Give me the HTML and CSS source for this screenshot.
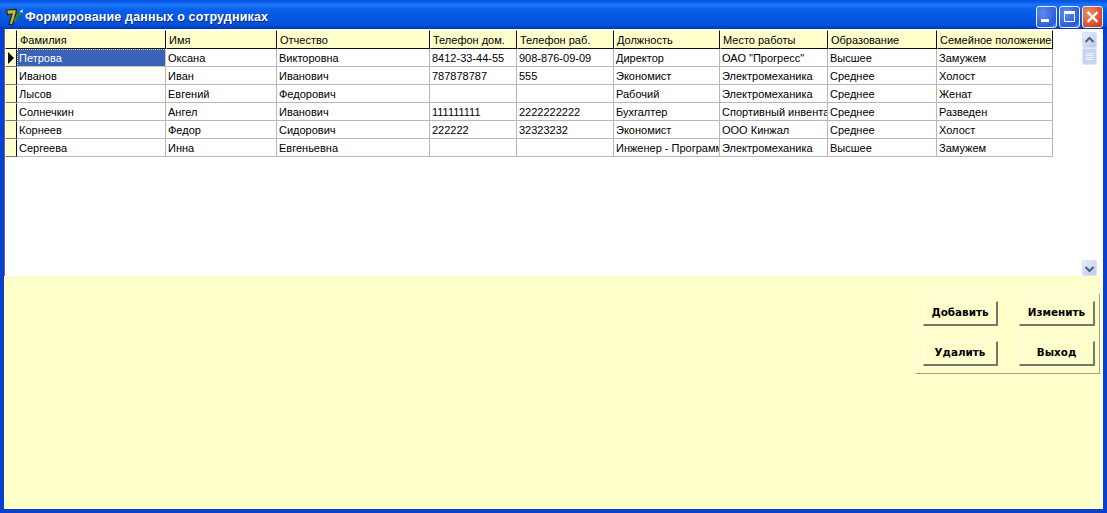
FILE: index.html
```html
<!DOCTYPE html>
<html lang="ru">
<head>
<meta charset="utf-8">
<title>Формирование данных о сотрудниках</title>
<link rel="stylesheet" href="styles.css">
</head>
<body>
<div class="window">
  <header class="titlebar">
    <svg class="appicon" width="20" height="18" viewBox="0 0 20 18">
      <path d="M1.5 2 L11.5 1.5 L11 5 L7.5 16.5 L4 16.5 L7 6 L2.5 6.5 Z" fill="#c9b840" stroke="#1f2a14" stroke-width="1.2"/>
      <path d="M9 13 L15.5 4.5" stroke="#2f7d32" stroke-width="3"/>
      <path d="M14.5 3.5 L18 1 L17.5 5 Z" fill="#e8e8d0"/>
    </svg>
    <span class="title">Формирование данных о сотрудниках</span>
    <div class="caption-buttons">
      <div class="cap cap-min"><svg width="19" height="20" viewBox="0 0 19 20"><rect x="4" y="12" width="8" height="3" fill="#fff"/></svg></div>
      <div class="cap cap-max"><svg width="19" height="20" viewBox="0 0 19 20"><path d="M4.5 4.5h10v10h-10z" fill="none" stroke="#fff"/><rect x="4" y="4" width="11" height="3" fill="#fff"/></svg></div>
      <div class="cap cap-close"><svg width="19" height="20" viewBox="0 0 19 20"><path d="M4.5 5 L14.5 15 M14.5 5 L4.5 15" stroke="#fff" stroke-width="2.4"/></svg></div>
    </div>
  </header>
  <main class="client">
    <section class="grid-area">
      <table class="grid">
        <colgroup>
          <col class="c0"><col class="c1"><col class="c2"><col class="c3"><col class="c4"><col class="c5"><col class="c6"><col class="c7"><col class="c8"><col class="c9">
        </colgroup>
        <thead>
          <tr><th></th><th>Фамилия</th><th>Имя</th><th>Отчество</th><th>Телефон дом.</th><th>Телефон раб.</th><th>Должность</th><th>Место работы</th><th>Образование</th><th>Семейное положение</th></tr>
        </thead>
        <tbody>
          <tr><th class="ind"><span class="arrow"></span></th><td class="sel">Петрова</td><td>Оксана</td><td>Викторовна</td><td>8412-33-44-55</td><td>908-876-09-09</td><td>Директор</td><td>ОАО "Прогресс"</td><td>Высшее</td><td>Замужем</td></tr>
          <tr><th class="ind"></th><td>Иванов</td><td>Иван</td><td>Иванович</td><td>787878787</td><td>555</td><td>Экономист</td><td>Электромеханика</td><td>Среднее</td><td>Холост</td></tr>
          <tr><th class="ind"></th><td>Лысов</td><td>Евгений</td><td>Федорович</td><td></td><td></td><td>Рабочий</td><td>Электромеханика</td><td>Среднее</td><td>Женат</td></tr>
          <tr><th class="ind"></th><td>Солнечкин</td><td>Ангел</td><td>Иванович</td><td>111111111</td><td>2222222222</td><td>Бухгалтер</td><td>Спортивный инвентарь</td><td>Среднее</td><td>Разведен</td></tr>
          <tr><th class="ind"></th><td>Корнеев</td><td>Федор</td><td>Сидорович</td><td>222222</td><td>32323232</td><td>Экономист</td><td>ООО Кинжал</td><td>Среднее</td><td>Холост</td></tr>
          <tr><th class="ind"></th><td>Сергеева</td><td>Инна</td><td>Евгеньевна</td><td></td><td></td><td>Инженер - Программист</td><td>Электромеханика</td><td>Высшее</td><td>Замужем</td></tr>
        </tbody>
      </table>
      <div class="scrollbar">
        <div class="sb-btn"><svg width="15" height="15" viewBox="0 0 15 15"><path d="M3.5 9 L7.5 5 L11.5 9" fill="none" stroke="#4d6185" stroke-width="2"/></svg></div>
        <div class="sb-thumb"><span></span><span></span><span></span><span></span></div>
        <div class="sb-track"></div>
        <div class="sb-btn"><svg width="15" height="15" viewBox="0 0 15 15"><path d="M3.5 6 L7.5 10 L11.5 6" fill="none" stroke="#4d6185" stroke-width="2"/></svg></div>
      </div>
    </section>
    <section class="lower">
      <div class="panel">
        <button class="btn">Добавить</button>
        <button class="btn">Изменить</button>
        <button class="btn">Удалить</button>
        <button class="btn">Выход</button>
      </div>
    </section>
  </main>
</div>
</body>
</html>
```
FILE: styles.css
```css
* { box-sizing: border-box; }
html, body { margin: 0; height: 100%; overflow: hidden; }
body { font-family: "Liberation Sans", Arial, sans-serif; font-size: 11px; color: #000; }

.window {
  width: 1107px;
  height: 513px;
  display: flex;
  flex-direction: column;
  background: #0a3fd0;
}

.titlebar {
  height: 29px;
  flex: none;
  display: flex;
  align-items: center;
  padding: 4px 4px 0 5px;
  background: linear-gradient(to bottom, #0a4fd8 0, #0a5cf0 2px, #1a78f4 5px, #0a5eea 10px, #0556e4 20px, #0450d8 25px, #0338a8 29px);
}
.appicon { flex: none; }
.title {
  font-weight: bold;
  font-size: 12.5px;
  letter-spacing: 0.15px;
  color: #fff;
  text-shadow: 1px 1px 0 #0a2a80;
  white-space: nowrap;
}
.caption-buttons { margin-left: auto; display: flex; gap: 2px; }
.cap {
  width: 21px;
  height: 22px;
  border: 1px solid #e8eefc;
  border-radius: 3px;
  overflow: hidden;
  display: flex;
  align-items: center;
  justify-content: center;
}
.cap svg { flex: none; }
.cap-min, .cap-max { background: radial-gradient(circle at 30% 30%, #5f8cf0, #2a5bd8 75%, #6d93ea); }
.cap-close { background: radial-gradient(circle at 30% 30%, #ee8f6c, #d6461f 75%, #c43a1c); }

.client {
  flex: 1;
  margin: 0 4px 4px 4px;
  display: flex;
  flex-direction: column;
  background: #ffffcc;
  min-height: 0;
}

.grid-area {
  height: 247px;
  flex: none;
  background: #fff;
  display: flex;
  padding: 1px 0 0 0;
  border-left: 1px solid #5a6a8a;
}

.grid {
  width: 1048px;
  height: 127px;
  flex: none;
  table-layout: fixed;
  border-collapse: separate;
  border-spacing: 0;
  align-self: flex-start;
}
.c0 { width: 12px; }
.c1 { width: 149px; }
.c2 { width: 111px; }
.c3 { width: 153px; }
.c4 { width: 87px; }
.c5 { width: 97px; }
.c6 { width: 106px; }
.c7 { width: 108px; }
.c8 { width: 109px; }
.c9 { width: 116px; }

.grid th, .grid td {
  height: 18px;
  padding: 0 0 0 2px;
  font-size: 11px;
  font-weight: normal;
  text-align: left;
  white-space: nowrap;
  overflow: hidden;
}
.grid thead th {
  height: 19px;
  background: #ffffcc;
  border-top: 1px solid #fff;
  border-left: 1px solid #fff;
  border-right: 1px solid #111;
  border-bottom: 1px solid #111;
}
.grid td {
  border-right: 1px solid #b8b8b8;
  border-bottom: 1px solid #b8b8b8;
  background: #fff;
}
.grid .ind {
  padding: 0;
  background: #ffffcc;
  border-top: 1px solid #fff;
  border-left: 1px solid #fff;
  border-right: 1px solid #111;
  border-bottom: 1px solid #777;
}
.grid td.sel {
  background: #3a62b8;
  color: #fff;
  outline: 1px dotted #d8d8a8;
  outline-offset: -1px;
}
.arrow {
  display: block;
  width: 0;
  height: 0;
  margin-left: 2px;
  border-left: 6px solid #000;
  border-top: 6px solid transparent;
  border-bottom: 6px solid transparent;
}

.scrollbar {
  width: 15px;
  flex: none;
  margin-left: 29px;
  display: flex;
  flex-direction: column;
  background: #fff;
  padding-top: 2px;
}
.sb-btn {
  width: 15px;
  height: 16px;
  flex: none;
  background: linear-gradient(135deg, #e8eefc, #bcc8f0);
  border: 1px solid #d8e0f8;
  border-radius: 2px;
  display: flex;
  align-items: center;
  justify-content: center;
}
.sb-btn svg { flex: none; }
.sb-thumb {
  width: 15px;
  height: 17px;
  flex: none;
  background: #c8d4f4;
  border: 1px solid #dfe6fa;
  border-radius: 2px;
  display: flex;
  flex-direction: column;
  align-items: center;
  justify-content: center;
  gap: 1px;
}
.sb-thumb span { display: block; width: 8px; height: 1px; background: #eef2fc; }
.sb-track { flex: 1; }

.lower {
  flex: 1;
  display: flex;
  justify-content: flex-end;
  align-items: flex-start;
  padding: 17px 3px 0 0;
  background: #ffffcc;
}
.panel {
  width: 185px;
  height: 81px;
  padding: 7px 0 0 7px;
  display: grid;
  grid-template-columns: 75px 76px;
  grid-template-rows: 25px 25px;
  column-gap: 21px;
  row-gap: 15px;
  border-top: 1px solid #fffff0;
  border-left: 1px solid #fffff0;
  border-right: 1px solid #a0a08c;
  border-bottom: 1px solid #a0a08c;
}
.btn {
  margin: 0;
  padding: 0 0 2px 0;
  background: #ffffcc;
  font-family: "DejaVu Sans", Verdana, sans-serif;
  font-size: 10.4px;
  font-weight: bold;
  color: #000;
  border-top: 1px solid #fffff4;
  border-left: 1px solid #fffff4;
  border-right: 2px solid #77776a;
  border-bottom: 2px solid #77776a;
}
```
